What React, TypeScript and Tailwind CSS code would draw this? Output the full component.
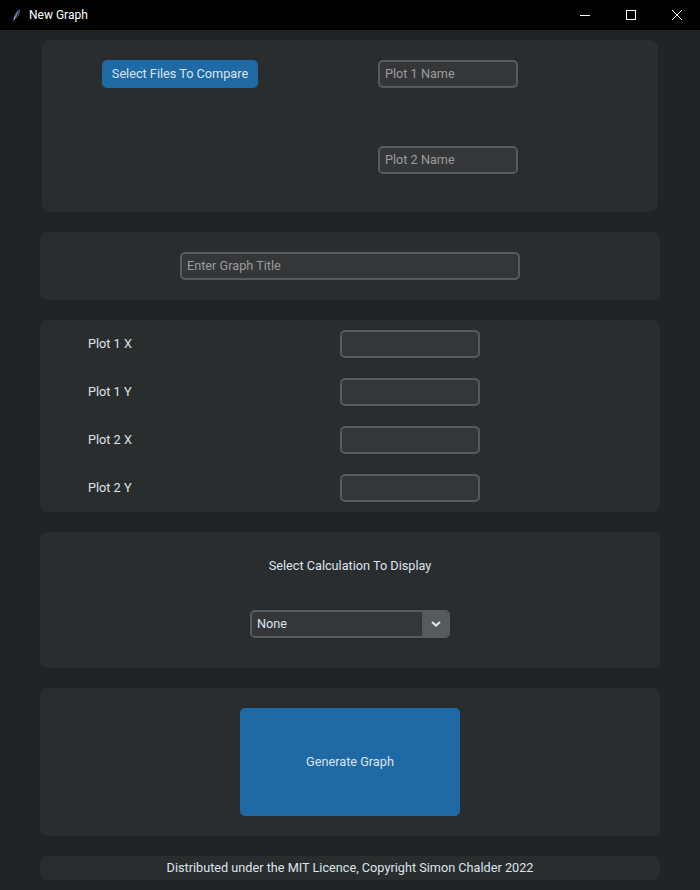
import React from "react";

const Field = ({ placeholder, width }: { placeholder?: string; width: string }) => (
	<input
		className={`${width} h-7 rounded-[5px] border-2 border-[#565b5e] bg-[#343638] px-[5px] pb-[2px] text-[12.7px] text-[#dce4ee] outline-none placeholder:text-[#9a9c9e]`}
		placeholder={placeholder}
		readOnly
	/>
);

const plotRows = ["Plot 1 X", "Plot 1 Y", "Plot 2 X", "Plot 2 Y"];

const App = () => {
	return (
		<div className="flex h-[890px] w-[700px] flex-col overflow-hidden bg-[#212325] font-['Roboto',sans-serif] text-[12.7px] text-[#dce4ee]">
			<header className="flex h-[30px] shrink-0 items-center bg-black text-white">
				<svg className="ml-3 h-[14px] w-[10px]" viewBox="0 0 10 14" fill="none">
					<path d="M2 11 C2.5 7 4.5 3.5 7.5 2 C7.5 5 6 8.5 3.5 10 Z" stroke="#5b8fd6" strokeWidth="0.8" />
					<path d="M1.5 12.5 L6 4" stroke="#e8eef8" strokeWidth="0.7" />
				</svg>
				<span className="ml-[7px] text-xs">New Graph</span>
				<div className="ml-auto flex h-full">
					<button className="flex w-[46px] items-center justify-center">
						<svg className="h-[10px] w-[10px]" viewBox="0 0 10 10">
							<path d="M0 5.5H10" stroke="white" strokeWidth="1" />
						</svg>
					</button>
					<button className="flex w-[46px] items-center justify-center">
						<svg className="h-[10px] w-[10px]" viewBox="0 0 10 10" fill="none">
							<rect x="0.5" y="0.5" width="9" height="9" stroke="white" strokeWidth="1" />
						</svg>
					</button>
					<button className="flex w-[46px] items-center justify-center">
						<svg className="h-[10px] w-[10px]" viewBox="0 0 10 10">
							<path d="M0 0L10 10M10 0L0 10" stroke="white" strokeWidth="1" />
						</svg>
					</button>
				</div>
			</header>

			<main className="flex flex-col gap-5 px-10 pt-[10px]">
				<section className="mx-[2px] flex h-[172px] items-start rounded-lg bg-[#2a2d2e] pl-[60px] pt-5">
					<button className="h-7 w-[156px] rounded-[5px] bg-[#1f6aa5]">Select Files To Compare</button>
					<div className="ml-[120px] flex flex-col gap-[58px]">
						<Field placeholder="Plot 1 Name" width="w-[140px]" />
						<Field placeholder="Plot 2 Name" width="w-[140px]" />
					</div>
				</section>

				<section className="flex justify-center rounded-lg bg-[#2a2d2e] py-5">
					<Field placeholder="Enter Graph Title" width="w-[340px]" />
				</section>

				<section className="flex flex-col gap-5 rounded-lg bg-[#2a2d2e] py-[10px] pl-12">
					{plotRows.map((row) => (
						<div key={row} className="flex items-center">
							<span className="w-[252px]">{row}</span>
							<Field width="w-[140px]" />
						</div>
					))}
				</section>

				<section className="flex h-[136px] flex-col items-center rounded-lg bg-[#2a2d2e] pt-[26px]">
					<p className="leading-[16px]">Select Calculation To Display</p>
					<div className="mt-[36px] flex h-7 w-[200px] overflow-hidden rounded-[5px] border-2 border-[#565b5e] bg-[#343638]">
						<span className="flex-1 pl-[5px] leading-6">None</span>
						<span className="flex w-[26px] items-center justify-center bg-[#565b5e] pl-[2px]">
							<svg className="h-2 w-[10px]" viewBox="0 0 10 8" fill="none">
								<path d="M1 2L5 5.5L9 2" stroke="#dce4ee" strokeWidth="2.2" />
							</svg>
						</span>
					</div>
				</section>

				<section className="flex justify-center rounded-lg bg-[#2a2d2e] py-5">
					<button className="h-[108px] w-[220px] rounded-[5px] bg-[#1f6aa5]">Generate Graph</button>
				</section>

				<footer className="flex h-6 items-center justify-center rounded-lg bg-[#2a2d2e]">
					Distributed under the MIT Licence, Copyright Simon Chalder 2022
				</footer>
			</main>
		</div>
	);
};

export default App;
